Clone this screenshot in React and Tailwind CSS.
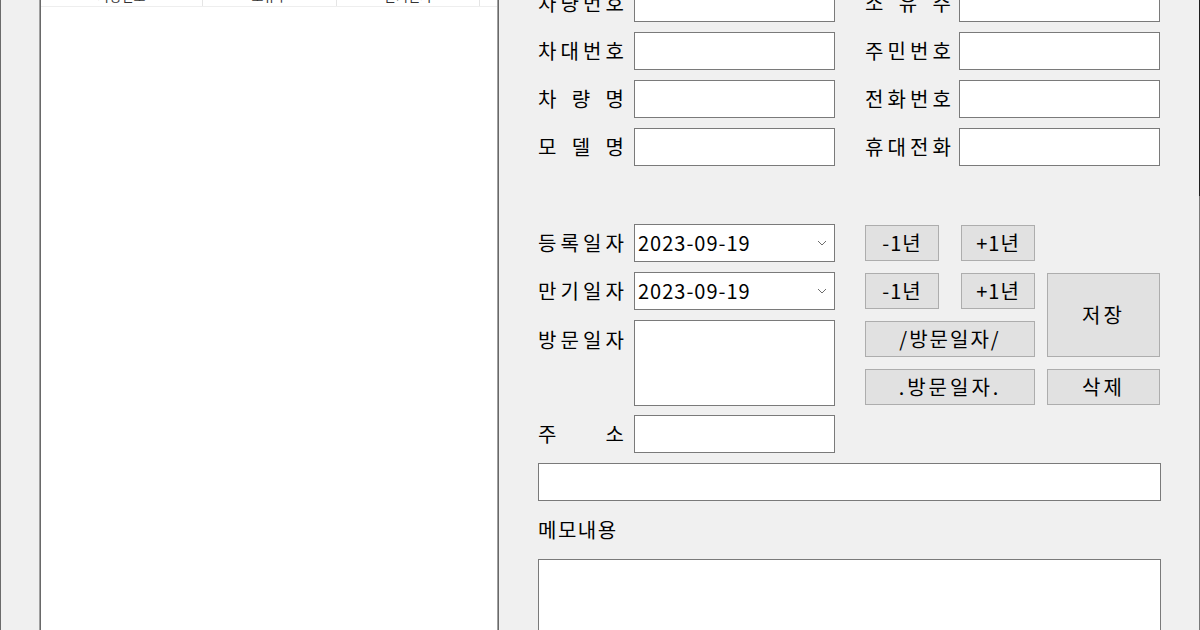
import React from "react";

const FONT = {
  fontFamily: '"Noto Sans CJK KR", "Noto Sans", sans-serif',
};

// label spread across a fixed width, like the WinForms spaced labels
function Label({ text, className = "" }) {
  const chars = text.split("").filter((c) => c !== " ");
  return (
    <div
      className={`flex justify-between items-center w-[86px] text-[20px] leading-none text-black ${className}`}
    >
      {chars.map((c, i) => (
        <span key={i}>{c}</span>
      ))}
    </div>
  );
}

function TextBox({ className = "" }) {
  return (
    <div
      className={`shrink-0 bg-white border border-[#7a7a7a] ${className}`}
    ></div>
  );
}

function Combo({ value }) {
  return (
    <div className="h-[38px] bg-white border border-[#7a7a7a] flex items-center justify-between pl-[3px] pr-[6px]">
      <span className="text-[20px] leading-none tracking-[1px] text-black">{value}</span>
      <svg width="10" height="6" viewBox="0 0 10 6" className="mr-[1px]">
        <path
          d="M1 1 L5 5 L9 1"
          fill="none"
          stroke="#6d6d6d"
          strokeWidth="1"
        />
      </svg>
    </div>
  );
}

function Btn({ children, className = "" }) {
  return (
    <div
      className={`bg-[#e1e1e1] border border-[#adadad] flex items-center justify-center text-[20px] leading-none text-black ${className}`}
    >
      {children}
    </div>
  );
}

export default function App() {
  return (
    <div
      className="w-[1200px] h-[630px] overflow-hidden bg-[#f0f0f0] flex"
      style={FONT}
    >
      {/* LEFT EDGE */}
      <div className="w-px h-full bg-[#6b6b6b]"></div>
      <div className="w-[38px]"></div>

      {/* LIST VIEW */}
      <div className="w-[460px] h-full flex">
        <div className="w-px bg-[#a0a0a0]"></div>
        <div className="w-px bg-[#696969]"></div>
        <div className="flex-1 bg-white flex flex-col">
          <div className="h-[7px] flex border-b border-[#eeeeee] overflow-hidden text-[13px] text-[#333] leading-none">
            <div className="w-[162px] border-r border-[#e5e5e5] flex justify-center">
              <span className="-mt-[11px]">차량번호</span>
            </div>
            <div className="w-[134px] border-r border-[#e5e5e5] flex justify-center">
              <span className="-mt-[11px]">소유주</span>
            </div>
            <div className="w-[143px] border-r border-[#e5e5e5] flex justify-center">
              <span className="-mt-[11px]">만기일자</span>
            </div>
          </div>
        </div>
        <div className="w-px bg-[#a0a0a0]"></div>
        <div className="w-px bg-[#696969]"></div>
      </div>

      {/* FORM */}
      <div className="w-[660px] ml-[39px] flex flex-col -mt-[16px]">
        {/* TOP FIELDS */}
        <div className="shrink-0 grid grid-cols-[96px_201px_30px_94px_201px] grid-rows-[38px_38px_38px_38px] gap-y-[10px] items-center">
          <Label text="차량번호" />
          <TextBox className="h-[38px]" />
          <div></div>
          <Label text="소 유 주" className="w-[84px]" />
          <TextBox className="h-[38px]" />

          <Label text="차대번호" />
          <TextBox className="h-[38px]" />
          <div></div>
          <Label text="주민번호" className="w-[84px]" />
          <TextBox className="h-[38px]" />

          <Label text="차 량 명" />
          <TextBox className="h-[38px]" />
          <div></div>
          <Label text="전화번호" className="w-[84px]" />
          <TextBox className="h-[38px]" />

          <Label text="모 델 명" />
          <TextBox className="h-[38px]" />
          <div></div>
          <Label text="휴대전화" className="w-[84px]" />
          <TextBox className="h-[38px]" />
        </div>

        {/* DATES + BUTTONS */}
        <div className="shrink-0 mt-[58px] grid grid-cols-[96px_201px_30px_74px_22px_74px_12px_113px] grid-rows-[38px_38px_38px_38px] gap-y-[10px]">
          <Label text="등록일자" className="self-center" />
          <Combo value="2023-09-19" />
          <div></div>
          <Btn className="h-[36px] self-center tracking-[1px]">-1년</Btn>
          <div></div>
          <Btn className="h-[36px] self-center tracking-[1px]">+1년</Btn>
          <div></div>
          <div></div>

          <Label text="만기일자" className="self-center" />
          <Combo value="2023-09-19" />
          <div></div>
          <Btn className="h-[36px] self-center tracking-[1px]">-1년</Btn>
          <div></div>
          <Btn className="h-[36px] self-center tracking-[1px]">+1년</Btn>
          <div></div>
          <Btn className="row-span-2 my-[1px] tracking-[3px]">저장</Btn>

          <Label text="방문일자" className="self-start mt-[10px]" />
          <TextBox className="row-span-2" />
          <div></div>
          <Btn className="col-span-3 h-[36px] self-center tracking-[2px]">
            /방문일자/
          </Btn>
          <div></div>

          <div></div>
          <div></div>
          <Btn className="col-span-3 h-[36px] self-center tracking-[3px]">
            .방문일자.
          </Btn>
          <div></div>
          <Btn className="h-[36px] self-center tracking-[3px]">삭제</Btn>
        </div>

        {/* ADDRESS */}
        <div className="shrink-0 mt-[9px] flex items-center">
          <div className="w-[96px]">
            <Label text="주   소" className="w-[86px]" />
          </div>
          <TextBox className="w-[201px] h-[38px]" />
        </div>
        <TextBox className="mt-[10px] w-[623px] h-[38px]" />

        {/* MEMO */}
        <div className="shrink-0 h-[58px] flex items-center">
          <span className="text-[20px] leading-none tracking-[1.5px] text-black">
            메모내용
          </span>
        </div>
        <TextBox className="w-[623px] h-[120px]" />
      </div>

      {/* RIGHT EDGE */}
      <div className="ml-auto w-px h-full flex flex-col">
        <div className="h-[196px] bg-[#1e1e1e]"></div>
        <div className="flex-1 bg-[#7a7a7a]"></div>
      </div>
    </div>
  );
}
